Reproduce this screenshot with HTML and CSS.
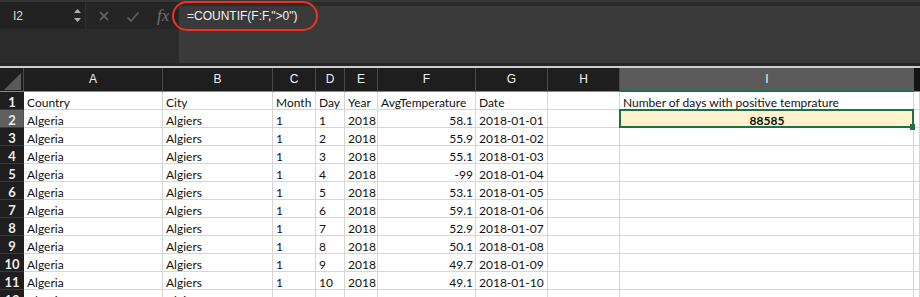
FILE: index.html
```html
<!DOCTYPE html>
<html>
<head>
<meta charset="utf-8">
<link rel="stylesheet" href="styles.css">
</head>
<body>
<div class="app">
  <div class="toolbar">
    <div class="left">
      <div class="left-top">
        <div class="namebox">
          <span class="name">I2</span>
          <svg class="updown" width="9" height="16" viewBox="0 0 9 16"><path d="M1 5 L4.5 1 L8 5 Z" fill="#b0b0b0"/><path d="M1 10 L4.5 14 L8 10 Z" fill="#b0b0b0"/></svg>
        </div>
        <div class="actions">
          <svg class="ico" width="12" height="12" viewBox="0 0 12 12"><path d="M2 2 L10 10 M10 2 L2 10" stroke="#5e5e5e" stroke-width="1.8" fill="none"/></svg>
          <svg class="ico check" width="14" height="12" viewBox="0 0 14 12"><path d="M1.5 6.5 L5 10 L12.5 1.5" stroke="#5e5e5e" stroke-width="1.8" fill="none"/></svg>
          <span class="fx">fx</span>
        </div>
      </div>
    </div>
    <div class="formula">=COUNTIF(F:F,"&gt;0")</div>
    <div class="annot"></div>
  </div>
  <div class="divider"></div>
  <div class="topline"></div>
  <div class="sheet">
    <div class="corner"><svg width="24" height="23" viewBox="0 0 24 23"><path d="M21 5 L21 22 L4 22 Z" fill="#5a5a5a"/></svg></div>
    <div class="ch">A</div><div class="ch">B</div><div class="ch">C</div><div class="ch">D</div><div class="ch">E</div><div class="ch">F</div><div class="ch">G</div><div class="ch">H</div><div class="ch chsel">I</div><div class="ch chend"></div>

    <div class="rh">1</div><div class="c">Country</div><div class="c">City</div><div class="c">Month</div><div class="c">Day</div><div class="c">Year</div><div class="c">AvgTemperature</div><div class="c">Date</div><div class="c"></div><div class="c">Number of days with positive temprature</div><div class="c"></div>

    <div class="rh rhsel">2</div><div class="c">Algeria</div><div class="c">Algiers</div><div class="c">1</div><div class="c">1</div><div class="c">2018</div><div class="c r">58.1</div><div class="c">2018-01-01</div><div class="c"></div><div class="c active">88585</div><div class="c"></div>

    <div class="rh">3</div><div class="c">Algeria</div><div class="c">Algiers</div><div class="c">1</div><div class="c">2</div><div class="c">2018</div><div class="c r">55.9</div><div class="c">2018-01-02</div><div class="c"></div><div class="c"></div><div class="c"></div>

    <div class="rh">4</div><div class="c">Algeria</div><div class="c">Algiers</div><div class="c">1</div><div class="c">3</div><div class="c">2018</div><div class="c r">55.1</div><div class="c">2018-01-03</div><div class="c"></div><div class="c"></div><div class="c"></div>

    <div class="rh">5</div><div class="c">Algeria</div><div class="c">Algiers</div><div class="c">1</div><div class="c">4</div><div class="c">2018</div><div class="c r">-99</div><div class="c">2018-01-04</div><div class="c"></div><div class="c"></div><div class="c"></div>

    <div class="rh">6</div><div class="c">Algeria</div><div class="c">Algiers</div><div class="c">1</div><div class="c">5</div><div class="c">2018</div><div class="c r">53.1</div><div class="c">2018-01-05</div><div class="c"></div><div class="c"></div><div class="c"></div>

    <div class="rh">7</div><div class="c">Algeria</div><div class="c">Algiers</div><div class="c">1</div><div class="c">6</div><div class="c">2018</div><div class="c r">59.1</div><div class="c">2018-01-06</div><div class="c"></div><div class="c"></div><div class="c"></div>

    <div class="rh">8</div><div class="c">Algeria</div><div class="c">Algiers</div><div class="c">1</div><div class="c">7</div><div class="c">2018</div><div class="c r">52.9</div><div class="c">2018-01-07</div><div class="c"></div><div class="c"></div><div class="c"></div>

    <div class="rh">9</div><div class="c">Algeria</div><div class="c">Algiers</div><div class="c">1</div><div class="c">8</div><div class="c">2018</div><div class="c r">50.1</div><div class="c">2018-01-08</div><div class="c"></div><div class="c"></div><div class="c"></div>

    <div class="rh">10</div><div class="c">Algeria</div><div class="c">Algiers</div><div class="c">1</div><div class="c">9</div><div class="c">2018</div><div class="c r">49.7</div><div class="c">2018-01-09</div><div class="c"></div><div class="c"></div><div class="c"></div>

    <div class="rh">11</div><div class="c">Algeria</div><div class="c">Algiers</div><div class="c">1</div><div class="c">10</div><div class="c">2018</div><div class="c r">49.1</div><div class="c">2018-01-10</div><div class="c"></div><div class="c"></div><div class="c"></div>

    <div class="rh">12</div><div class="c">Algeria</div><div class="c">Algiers</div><div class="c">1</div><div class="c">11</div><div class="c">2018</div><div class="c r">51.3</div><div class="c">2018-01-11</div><div class="c"></div><div class="c"></div><div class="c"></div>
  </div>
</div>
</body>
</html>
```

FILE: styles.css
```css
html, body {
  margin: 0;
  padding: 0;
}
body {
  width: 920px;
  height: 297px;
  overflow: hidden;
  background: #ffffff;
}
.app {
  width: 920px;
}
.toolbar {
  position: relative;
  display: flex;
  height: 61px;
  border-top: 2px solid #363636;
  background: #2b2b2b;
}
.left {
  width: 179px;
  flex: none;
}
.left-top {
  display: flex;
  height: 27px;
}
.namebox {
  width: 86px;
  flex: none;
  display: flex;
  align-items: center;
  background: #222222;
  border-right: 1px solid #303030;
  box-sizing: border-box;
}
.name {
  font-family: "Liberation Sans", Arial, sans-serif;
  font-size: 12px;
  color: #dcdcdc;
  margin-left: 13px;
  margin-top: 1px;
}
.updown {
  margin-left: 50px;
  margin-top: 1px;
}
.actions {
  flex: 1;
  display: flex;
  align-items: center;
  background: #252525;
}
.ico {
  margin-left: 12px;
  margin-top: 1px;
}
.check {
  margin-left: 16px;
  margin-top: 3px;
}
.fx {
  font-family: "Liberation Serif", "Times New Roman", serif;
  font-style: italic;
  font-size: 17px;
  color: #707070;
  margin-left: 17px;
  margin-top: 1px;
}
.formula {
  flex: 1;
  margin-top: 4px;
  height: 57px;
  box-sizing: border-box;
  background: #3a3a3a;
  padding: 3px 0 0 8px;
  font-family: "Liberation Sans", Arial, sans-serif;
  font-size: 12px;
  line-height: 14px;
  color: #f4f4f4;
}
.annot {
  position: absolute;
  left: 172px;
  top: -1px;
  width: 146px;
  height: 30px;
  box-sizing: border-box;
  border: 2.5px solid #f5301c;
  border-radius: 15px;
}
.divider {
  height: 3px;
  background: #262626;
}
.topline {
  height: 2px;
  background: #cdcdcd;
}
.sheet {
  display: grid;
  grid-template-columns: 24px 139px 110px 43px 29px 33px 98px 72px 72px 294px 6px;
  grid-template-rows: 24px repeat(12, 18px);
}
.corner {
  background: #1e1e1e;
  border-bottom: 1px solid #8a8a8a;
  border-right: 1px solid #4a4a4a;
  box-sizing: border-box;
  overflow: hidden;
}
.corner svg {
  display: block;
}
.ch {
  background: #1e1e1e;
  color: #f2f2f2;
  font-family: "Liberation Sans", Arial, sans-serif;
  font-size: 12px;
  line-height: 23px;
  text-align: center;
  border-right: 1px solid #4a4a4a;
  border-bottom: 1px solid #8a8a8a;
  box-sizing: border-box;
}
.chsel {
  background: #5a5a5a;
  border-bottom: 2px solid #1e7145;
  line-height: 22px;
  border-right: none;
}
.chend {
  background: #141414;
  border-right: none;
}
.rh {
  background: #1e1e1e;
  color: #ececec;
  font-family: Lato, "Liberation Sans", sans-serif;
  font-weight: 700;
  font-size: 13px;
  line-height: 13px;
  padding-top: 4px;
  text-align: center;
  border-bottom: 1px solid #3a3a3a;
  box-sizing: border-box;
}
.rhsel {
  background: #5f5f5f;
  box-shadow: inset -1px 0 0 #1e7145;
}
.c {
  background: #ffffff;
  color: #111111;
  font-family: Lato, "Liberation Sans", sans-serif;
  font-size: 12px;
  line-height: 13px;
  padding: 4px 2px 0 3px;
  border-right: 1px solid #d6d6d6;
  border-bottom: 1px solid #d6d6d6;
  box-sizing: border-box;
  white-space: nowrap;
  overflow: hidden;
}
.r {
  text-align: right;
}
.active {
  position: relative;
  overflow: visible;
  background: #fff2cc;
  font-weight: 700;
  text-align: center;
  z-index: 2;
}
.active::after {
  content: "";
  position: absolute;
  left: -1px;
  top: -1px;
  right: -1px;
  bottom: -1px;
  border: 2px solid #1e7145;
}
.active::before {
  content: "";
  position: absolute;
  right: -2px;
  bottom: -3px;
  width: 5px;
  height: 6px;
  background: #1e7145;
  z-index: 3;
}
```
